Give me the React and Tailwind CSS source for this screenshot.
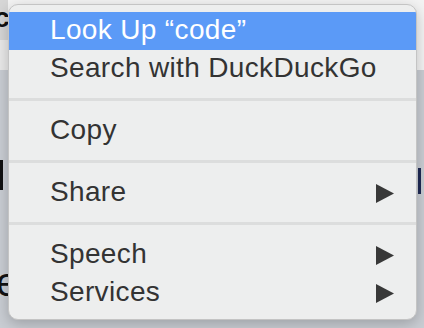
import React from 'react'

const items = [
  { label: 'Look Up “code”', active: true },
  { label: 'Search with DuckDuckGo' },
  { sep: true },
  { label: 'Copy' },
  { sep: true },
  { label: 'Share', sub: true },
  { sep: true },
  { label: 'Speech', sub: true },
  { label: 'Services', sub: true },
]

function Arrow() {
  return (
    <svg width="18" height="19" viewBox="0 0 18 19" className="shrink-0">
      <polygon points="0,0 18,9.5 0,19" fill="#383838" />
    </svg>
  )
}

export default function App() {
  return (
    <div className="relative w-[424px] h-[328px] overflow-hidden font-['Liberation_Sans',Arial,sans-serif]">
      {/* page behind the menu */}
      <div className="flex flex-col h-full">
        <div className="h-[40px] flex bg-[#f3f3f3]">
          <div className="w-[8px] bg-[#d6d6d6] overflow-hidden">
            <span className="block -ml-[6px] mt-[4px] text-[28px] leading-[28px] font-bold text-[#111]">c</span>
          </div>
        </div>
        <div className="h-[30px] flex bg-[#f3f3f3]">
          <div className="w-[8px] bg-[#e9e9e9]" />
        </div>
        <div className="flex-1 flex justify-between bg-[#c9cdd3]">
          <div className="w-[8px] flex flex-col">
            <div className="h-[90px]" />
            <div className="w-[3px] h-[30px] bg-[#111]" />
            <div className="h-[72px]" />
            <span className="block -ml-[4px] text-[40px] leading-[40px] text-[#111]">e</span>
          </div>
          <div className="w-[8px] flex flex-col items-start">
            <div className="h-[98px]" />
            <div className="ml-[2px] w-[3px] h-[26px] bg-[#1f2a55]" />
          </div>
        </div>
      </div>

      {/* context menu */}
      <div className="absolute left-[8px] top-[4px] w-[409px] h-[316px] rounded-[10px] border border-[#c4c4c4] bg-[#edeeee] shadow-[0_4px_14px_rgba(0,0,0,0.22)] py-[7px] overflow-hidden">
        {items.map((it, i) =>
          it.sep ? (
            <div key={i} className="h-[24px] flex flex-col pt-[10px]">
              <div className="h-[3px] bg-[#dcdddd]" />
            </div>
          ) : (
            <div
              key={i}
              className={
                'h-[38px] flex items-center justify-between pl-[41px] pr-[22px] text-[28px] leading-[38px] tracking-[0.35px] ' +
                (it.active ? 'bg-[#5b9af7] text-white' : 'text-[#333333]')
              }
            >
              <span className="-mt-[2px]">{it.label}</span>
              {it.sub && <Arrow />}
            </div>
          )
        )}
      </div>
    </div>
  )
}
